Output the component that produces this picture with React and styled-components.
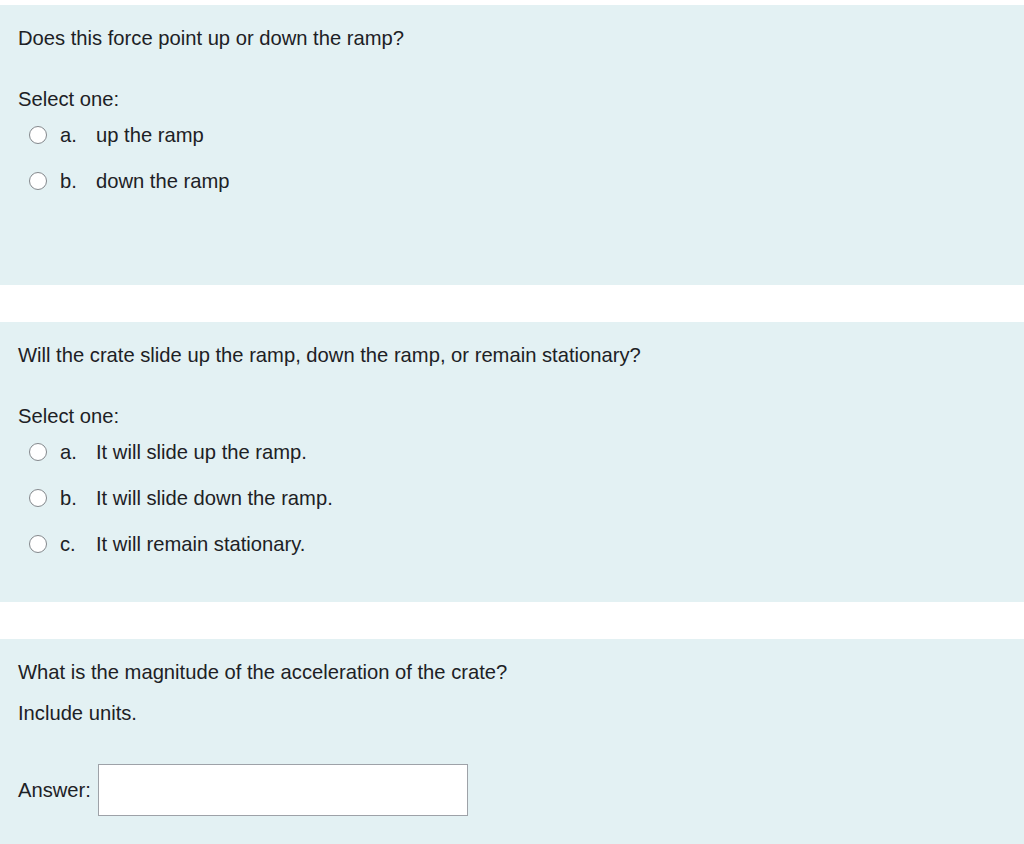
import React from 'react';
import styled, { createGlobalStyle } from 'styled-components';

const GlobalStyle = createGlobalStyle`
  html, body {
    margin: 0;
    padding: 0;
    background: #ffffff;
  }
  body {
    font-family: "Liberation Sans", Arial, Helvetica, sans-serif;
    color: #1d2125;
  }
`;

const Page = styled.div`
  padding-top: 5px;
  display: flex;
  flex-direction: column;
  gap: 37px;
`;

const Panel = styled.section`
  background-color: #e3f1f3;
  min-height: 280px;
  padding: 22px 18px 0;
  box-sizing: border-box;
  font-size: 20.2px;
  line-height: 22px;
`;

const QuestionText = styled.p`
  margin: 0;
`;

const Prompt = styled.div`
  margin-top: 39px;
`;

const Options = styled.div`
  margin-top: 14px;
  display: flex;
  flex-direction: column;
  gap: 24px;
`;

const OptionRow = styled.label`
  display: flex;
  align-items: center;
  height: 22px;
  padding-left: 11px;
`;

const Radio = styled.span`
  width: 18px;
  height: 18px;
  border-radius: 50%;
  border: 1.5px solid #84888c;
  background: #ffffff;
  box-sizing: border-box;
  flex-shrink: 0;
`;

const Letter = styled.span`
  width: 36px;
  margin-left: 13px;
`;

const Note = styled.p`
  margin: 19px 0 0;
`;

const AnswerRow = styled.div`
  margin-top: 40px;
  display: flex;
  align-items: center;
  gap: 7px;
`;

const AnswerInput = styled.input`
  width: 370px;
  height: 52px;
  box-sizing: border-box;
  border: 1px solid #9ea2a8;
  background: #ffffff;
  font-size: 20px;
  padding: 0 8px;
`;

const questions = [
  {
    text: 'Does this force point up or down the ramp?',
    options: ['up the ramp', 'down the ramp'],
  },
  {
    text: 'Will the crate slide up the ramp, down the ramp, or remain stationary?',
    options: ['It will slide up the ramp.', 'It will slide down the ramp.', 'It will remain stationary.'],
  },
];

const letters = ['a.', 'b.', 'c.'];

const App = () => (
  <>
    <GlobalStyle />
    <Page>
      {questions.map((q) => (
        <Panel key={q.text}>
          <QuestionText>{q.text}</QuestionText>
          <Prompt>Select one:</Prompt>
          <Options>
            {q.options.map((opt, i) => (
              <OptionRow key={opt}>
                <Radio />
                <Letter>{letters[i]}</Letter>
                <span>{opt}</span>
              </OptionRow>
            ))}
          </Options>
        </Panel>
      ))}
      <Panel>
        <QuestionText>What is the magnitude of the acceleration of the crate?</QuestionText>
        <Note>Include units.</Note>
        <AnswerRow>
          <span>Answer:</span>
          <AnswerInput type="text" />
        </AnswerRow>
      </Panel>
    </Page>
  </>
);

export default App;
